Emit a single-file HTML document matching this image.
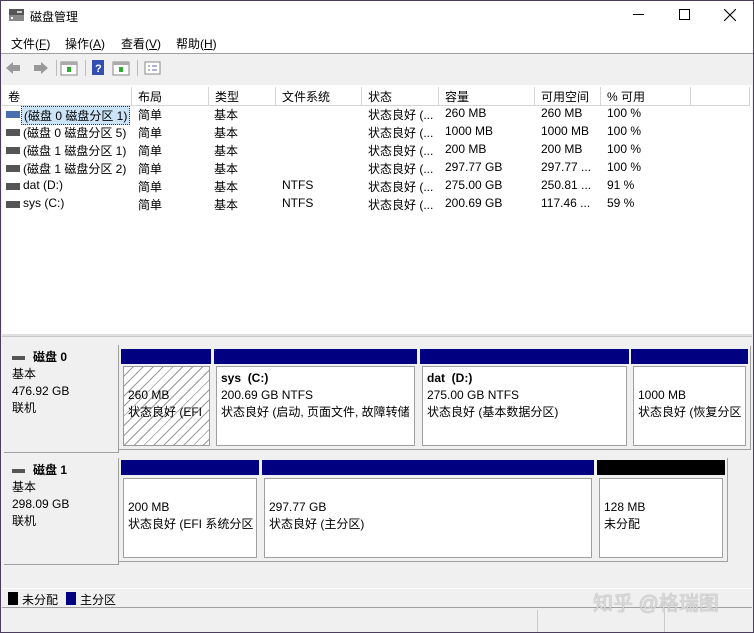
<!DOCTYPE html><html><head><meta charset="utf-8"><style>
*{box-sizing:border-box;margin:0;padding:0}
body{width:754px;height:633px;overflow:hidden;background:#f0f0f0;font-family:"Liberation Sans","Noto Sans CJK SC",sans-serif;font-size:12px;color:#000;position:relative}
.a{position:absolute;white-space:nowrap}
.frame{position:absolute;left:0;top:0;width:754px;height:633px;border:1px solid #4b3d5c;pointer-events:none}
.hdr{position:absolute;top:87px;height:19px;background:#fff;border-right:1px solid #d5d5d5;border-bottom:1px solid #d5d5d5;padding:1px 0 0 6px}
.row{position:absolute;left:2px;width:748px;height:18px}
.c{position:absolute;top:0px;white-space:nowrap}
.bar{position:absolute;height:15px;background:#000080}
.box{position:absolute;background:#fff;border:1px solid #a0a0a0;padding:3px 4px;line-height:17px;white-space:nowrap;overflow:hidden}
.dk{position:absolute;left:4px;width:115px;background:#f0f0f0;border-right:1px solid #a0a0a0;border-bottom:1px solid #a0a0a0;padding:4px 8px;line-height:17px}
</style></head><body>
<div class="a" style="left:0;top:0;width:754px;height:31px;background:#fff"></div>
<svg class="a" style="left:9px;top:9px" width="15" height="12"><rect x="0" y="0" width="15" height="6" fill="#555"/><rect x="0" y="6" width="15" height="6" fill="#888"/><rect x="2" y="8" width="2" height="2" fill="#fff"/><rect x="8" y="2" width="5" height="2" fill="#ccc"/></svg>
<div class="a" style="left:30px;top:8px">磁盘管理</div>
<div class="a" style="left:633px;top:14px;width:11px;height:1px;background:#000"></div>
<div class="a" style="left:679px;top:9px;width:11px;height:11px;border:1px solid #000"></div>
<svg class="a" style="left:724px;top:9px" width="12" height="12"><path d="M0 0L12 12M12 0L0 12" stroke="#000" stroke-width="1.1"/></svg>
<div class="a" style="left:0;top:31px;width:754px;height:23px;background:#fff;border-bottom:1px solid #a0a0a0"></div>
<div class="a" style="left:11px;top:35px">文件(<u>F</u>)</div>
<div class="a" style="left:65px;top:35px">操作(<u>A</u>)</div>
<div class="a" style="left:121px;top:35px">查看(<u>V</u>)</div>
<div class="a" style="left:176px;top:35px">帮助(<u>H</u>)</div>
<svg class="a" style="left:5px;top:59px" width="160" height="18">
<path d="M1 9L8 3V6H15V12H8V15Z" fill="#999"/><path d="M43 9L36 3V6H29V12H36V15Z" fill="#999"/>
<rect x="51" y="1" width="1" height="16" fill="#bbb"/>
<rect x="56" y="3" width="16" height="13" fill="#fff" stroke="#888"/><rect x="56" y="3" width="16" height="3" fill="#aaa"/><rect x="62" y="8" width="4" height="5" fill="#3a3"/>
<rect x="80" y="1" width="1" height="16" fill="#bbb"/>
<rect x="87" y="1" width="12" height="15" fill="#3350b0"/><text x="90" y="13" fill="#fff" font-size="11" font-family="Liberation Sans" font-weight="bold">?</text>
<rect x="108" y="3" width="16" height="13" fill="#fff" stroke="#888"/><rect x="108" y="3" width="16" height="3" fill="#aaa"/><rect x="114" y="8" width="4" height="5" fill="#3a3"/>
<rect x="132" y="1" width="1" height="16" fill="#bbb"/>
<rect x="140" y="3" width="15" height="12" fill="#fff" stroke="#888"/><path d="M143 7h2M143 11h2M147 7h5M147 11h5" stroke="#66a"/>
</svg>
<div class="a" style="left:2px;top:85px;width:750px;height:249px;background:#fff"></div>
<div class="hdr" style="left:2px;width:130px">卷</div>
<div class="hdr" style="left:132px;width:77px">布局</div>
<div class="hdr" style="left:209px;width:67px">类型</div>
<div class="hdr" style="left:276px;width:86px">文件系统</div>
<div class="hdr" style="left:362px;width:77px">状态</div>
<div class="hdr" style="left:439px;width:96px">容量</div>
<div class="hdr" style="left:535px;width:66px">可用空间</div>
<div class="hdr" style="left:601px;width:90px">% 可用</div>
<div class="hdr" style="left:691px;width:59px"></div>
<div class="row" style="top:106px"><div class="a" style="left:4px;top:5px;width:14px;height:7px;background:#4a6fb0"></div><div class="c" style="left:19px;background:#cce4f7;border:1px dotted #333;padding:0 2px;top:0">(磁盘 0 磁盘分区 1)</div><div class="c" style="left:136px">简单</div><div class="c" style="left:212px">基本</div><div class="c" style="left:366px">状态良好 (...</div><div class="c" style="left:443px">260 MB</div><div class="c" style="left:539px">260 MB</div><div class="c" style="left:605px">100 %</div></div>
<div class="row" style="top:124px"><div class="a" style="left:4px;top:5px;width:14px;height:7px;background:#555"></div><div class="c" style="left:21px">(磁盘 0 磁盘分区 5)</div><div class="c" style="left:136px">简单</div><div class="c" style="left:212px">基本</div><div class="c" style="left:366px">状态良好 (...</div><div class="c" style="left:443px">1000 MB</div><div class="c" style="left:539px">1000 MB</div><div class="c" style="left:605px">100 %</div></div>
<div class="row" style="top:142px"><div class="a" style="left:4px;top:5px;width:14px;height:7px;background:#555"></div><div class="c" style="left:21px">(磁盘 1 磁盘分区 1)</div><div class="c" style="left:136px">简单</div><div class="c" style="left:212px">基本</div><div class="c" style="left:366px">状态良好 (...</div><div class="c" style="left:443px">200 MB</div><div class="c" style="left:539px">200 MB</div><div class="c" style="left:605px">100 %</div></div>
<div class="row" style="top:160px"><div class="a" style="left:4px;top:5px;width:14px;height:7px;background:#555"></div><div class="c" style="left:21px">(磁盘 1 磁盘分区 2)</div><div class="c" style="left:136px">简单</div><div class="c" style="left:212px">基本</div><div class="c" style="left:366px">状态良好 (...</div><div class="c" style="left:443px">297.77 GB</div><div class="c" style="left:539px">297.77 ...</div><div class="c" style="left:605px">100 %</div></div>
<div class="row" style="top:178px"><div class="a" style="left:4px;top:5px;width:14px;height:7px;background:#555"></div><div class="c" style="left:21px">dat (D:)</div><div class="c" style="left:136px">简单</div><div class="c" style="left:212px">基本</div><div class="c" style="left:280px">NTFS</div><div class="c" style="left:366px">状态良好 (...</div><div class="c" style="left:443px">275.00 GB</div><div class="c" style="left:539px">250.81 ...</div><div class="c" style="left:605px">91 %</div></div>
<div class="row" style="top:196px"><div class="a" style="left:4px;top:5px;width:14px;height:7px;background:#555"></div><div class="c" style="left:21px">sys (C:)</div><div class="c" style="left:136px">简单</div><div class="c" style="left:212px">基本</div><div class="c" style="left:280px">NTFS</div><div class="c" style="left:366px">状态良好 (...</div><div class="c" style="left:443px">200.69 GB</div><div class="c" style="left:539px">117.46 ...</div><div class="c" style="left:605px">59 %</div></div>
<div class="a" style="left:2px;top:334px;width:750px;height:3px;background:#e0e0e0;border-bottom:1px solid #c8c8c8"></div>

<div class="dk" style="top:345px;height:108px"><div style="display:flex;align-items:center"><span style="display:inline-block;width:13px;height:4px;background:#555;margin-right:8px"></span><b>磁盘 0</b></div>基本<br>476.92 GB<br>联机</div>
<div class="a" style="left:119px;top:346px;width:632px;height:104px;border-right:1px solid #a0a0a0;border-bottom:1px solid #a0a0a0"></div>
<div class="bar" style="left:121px;top:349px;width:90px"></div>
<div class="box" style="left:123px;top:366px;width:87px;height:80px;border-color:#999;background:repeating-linear-gradient(135deg,#fff 0 6px,#999 6px 7px)"><br>260 MB<br>状态良好 (EFI</div>
<div class="bar" style="left:214px;top:349px;width:203px"></div>
<div class="box" style="left:216px;top:366px;width:199px;height:80px"><b>sys&nbsp; (C:)</b><br>200.69 GB NTFS<br>状态良好 (启动, 页面文件, 故障转储</div>
<div class="bar" style="left:420px;top:349px;width:209px"></div>
<div class="box" style="left:422px;top:366px;width:205px;height:80px"><b>dat&nbsp; (D:)</b><br>275.00 GB NTFS<br>状态良好 (基本数据分区)</div>
<div class="bar" style="left:631px;top:349px;width:117px"></div>
<div class="box" style="left:633px;top:366px;width:113px;height:80px"><br>1000 MB<br>状态良好 (恢复分区</div>

<div class="dk" style="top:458px;height:107px"><div style="display:flex;align-items:center"><span style="display:inline-block;width:13px;height:4px;background:#555;margin-right:8px"></span><b>磁盘 1</b></div>基本<br>298.09 GB<br>联机</div>
<div class="a" style="left:119px;top:458px;width:609px;height:104px;border-right:1px solid #a0a0a0;border-bottom:1px solid #a0a0a0"></div>
<div class="bar" style="left:121px;top:460px;width:138px"></div>
<div class="box" style="left:123px;top:478px;width:134px;height:80px"><br>200 MB<br>状态良好 (EFI 系统分区</div>
<div class="bar" style="left:262px;top:460px;width:332px"></div>
<div class="box" style="left:264px;top:478px;width:328px;height:80px"><br>297.77 GB<br>状态良好 (主分区)</div>
<div class="bar" style="left:597px;top:460px;width:128px;background:#000"></div>
<div class="box" style="left:599px;top:478px;width:124px;height:80px"><br>128 MB<br>未分配</div>

<div class="a" style="left:2px;top:588px;width:750px;height:20px;border-top:1px solid #fff;border-bottom:1px solid #a0a0a0"></div>
<div class="a" style="left:8px;top:592px;width:10px;height:13px;background:#000"></div>
<div class="a" style="left:22px;top:591px">未分配</div>
<div class="a" style="left:66px;top:592px;width:10px;height:13px;background:#000080"></div>
<div class="a" style="left:80px;top:591px">主分区</div>
<div class="a" style="left:593px;top:587px;font-size:20px;color:#d8d8d8;text-shadow:0 0 1px #888">知乎 @格瑞图</div>
<div class="a" style="left:537px;top:610px;width:1px;height:22px;background:#ccc"></div>
<div class="a" style="left:664px;top:610px;width:1px;height:22px;background:#ccc"></div>
<div class="frame"></div>
</body></html>
